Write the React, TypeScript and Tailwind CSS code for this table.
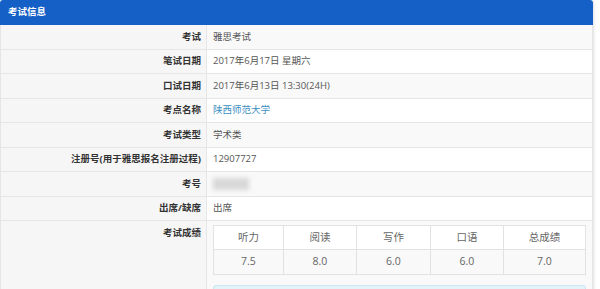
const ROWS: { label: string; value: React.ReactNode }[] = [
  { label: "考试", value: "雅思考试" },
  { label: "笔试日期", value: "2017年6月17日 星期六" },
  { label: "口试日期", value: "2017年6月13日 13:30(24H)" },
  { label: "考点名称", value: <a className="text-[#3d8fbf]">陕西师范大学</a> },
  { label: "考试类型", value: "学术类" },
  { label: "注册号(用于雅思报名注册过程)", value: "12907727" },
  { label: "考号", value: <span className="inline-block h-[12px] w-[36px] bg-[#d8d8d8] blur-[2px]" /> },
  { label: "出席/缺席", value: "出席" },
];

const SCORES = [
  { name: "听力", score: "7.5", w: "w-[70px]" },
  { name: "阅读", score: "8.0", w: "w-[73px]" },
  { name: "写作", score: "6.0", w: "w-[74px]" },
  { name: "口语", score: "6.0", w: "w-[73px]" },
  { name: "总成绩", score: "7.0", w: "flex-1" },
];

export default function App() {
  return (
    <div
      className="h-[289px] w-[600px] overflow-hidden bg-white text-[9.5px]"
      style={{ fontFamily: '"Open Sans", "Noto Sans CJK SC", sans-serif' }}
    >
      <div className="w-[593px] rounded-t-[3px] shadow-[1px_0_3px_rgba(0,0,0,0.12)]">
        {/* panel heading */}
        <div className="flex h-[25px] items-center rounded-t-[3px] bg-[#1560c6] pl-[8px] font-bold text-white">
          考试信息
        </div>

        {/* info rows */}
        <div className="border-x border-[#e6e6e6]">
          {ROWS.map((row, i) => (
            <div key={row.label} className="flex h-[24.5px] border-b border-[#e6e6e6]">
              <div className="flex w-[206px] shrink-0 items-center justify-end border-r border-[#e6e6e6] bg-[#f6f6f6] pr-[5px] font-bold text-[#333]">
                {row.label}
              </div>
              <div className={`flex flex-1 items-center pl-[6px] text-[#555] ${i % 2 === 0 ? "bg-[#f9f9f9]" : "bg-white"}`}>
                {row.value}
              </div>
            </div>
          ))}

          {/* scores */}
          <div className="flex h-[100px]">
            <div className="w-[206px] shrink-0 border-r border-[#e6e6e6] bg-[#f6f6f6] pr-[5px] pt-[5px] text-right font-bold text-[#333]">
              考试成绩
            </div>
            <div className="flex-1 bg-[#f9f9f9] pl-[6px] pr-[6px] pt-[4px]">
              <div className="border border-[#e2e2e2] text-[10.5px] text-[#666]">
                <div className="flex h-[24px] border-b border-[#e2e2e2] bg-white">
                  {SCORES.map((s, i) => (
                    <div
                      key={s.name}
                      className={`flex items-center justify-center ${s.w} ${i < SCORES.length - 1 ? "border-r border-[#e2e2e2]" : ""}`}
                    >
                      {s.name}
                    </div>
                  ))}
                </div>
                <div className="flex h-[24px] bg-[#f9f9f9]">
                  {SCORES.map((s, i) => (
                    <div
                      key={s.name}
                      className={`flex items-center justify-center ${s.w} ${i < SCORES.length - 1 ? "border-r border-[#e2e2e2]" : ""}`}
                    >
                      {s.score}
                    </div>
                  ))}
                </div>
              </div>
              <div className="mt-[10px] h-[30px] rounded-[3px] border border-[#c9e6f3] bg-[#e4f2fa]" />
            </div>
          </div>
        </div>
      </div>
    </div>
  );
}
